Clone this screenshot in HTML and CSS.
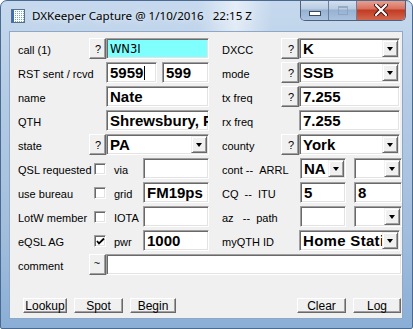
FILE: index.html
```html
<!DOCTYPE html>
<html>
<head>
<meta charset="utf-8">
<link rel="stylesheet" href="styles.css">
</head>
<body>
<div class="window">
  <div class="titlebar">
    <svg class="appicon" width="14" height="14" viewBox="0 0 14 14">
      <defs>
        <pattern id="dots" width="2" height="2" patternUnits="userSpaceOnUse">
          <rect width="2" height="2" fill="#ffffff"/>
          <rect width="1" height="1" fill="#6fa8dc"/>
        </pattern>
      </defs>
      <rect x="0.5" y="0.5" width="13" height="13" fill="url(#dots)" stroke="#5a6e8c"/>
      <rect x="1" y="1" width="2" height="12" fill="#3d6fb0"/>
    </svg>
    <span class="title">DXKeeper Capture @ 1/10/2016&nbsp;&nbsp;&nbsp;22:15 Z</span>
    <div class="caption">
      <div class="cbtn cmin"><span class="minbar"></span></div>
      <div class="cbtn cmax"><span class="maxbox"></span></div>
      <div class="cbtn cclose">
        <svg width="14" height="12" viewBox="0 0 14 12">
          <path d="M2 1 L12 11 M12 1 L2 11" stroke="#3a1010" stroke-width="4" stroke-linecap="round"/>
          <path d="M2 1 L12 11 M12 1 L2 11" stroke="#ffffff" stroke-width="2.2" stroke-linecap="round"/>
        </svg>
      </div>
    </div>
  </div>
  <div class="client">
    <div class="form">
      <!-- row 1 -->
      <div class="lbl">call (1)</div>
      <div class="qbtn">?</div>
      <div class="fld cyan"><span class="thin">WN3I</span></div>
      <div class="gap"></div>
      <div class="lbl">DXCC</div>
      <div class="qbtn">?</div>
      <div class="fld combo"><span class="val">K</span><span class="arrow"></span></div>

      <!-- row 2 -->
      <div class="lbl">RST sent / rcvd</div>
      <div class="empty"></div>
      <div class="split">
        <div class="fld w51"><span class="val">5959</span><span class="caret"></span></div>
        <div class="fld w47"><span class="val">599</span></div>
      </div>
      <div class="gap"></div>
      <div class="lbl">mode</div>
      <div class="qbtn">?</div>
      <div class="fld combo"><span class="val">SSB</span><span class="arrow"></span></div>

      <!-- row 3 -->
      <div class="lbl">name</div>
      <div class="empty"></div>
      <div class="fld"><span class="val">Nate</span></div>
      <div class="gap"></div>
      <div class="lbl">tx freq</div>
      <div class="qbtn">?</div>
      <div class="fld"><span class="val">7.255</span></div>

      <!-- row 4 -->
      <div class="lbl">QTH</div>
      <div class="empty"></div>
      <div class="fld"><span class="val">Shrewsbury, PA</span></div>
      <div class="gap"></div>
      <div class="lbl">rx freq</div>
      <div class="empty"></div>
      <div class="fld"><span class="val">7.255</span></div>

      <!-- row 5 -->
      <div class="lbl">state</div>
      <div class="qbtn">?</div>
      <div class="fld combo"><span class="val">PA</span><span class="arrow"></span></div>
      <div class="gap"></div>
      <div class="lbl">county</div>
      <div class="qbtn">?</div>
      <div class="fld combo"><span class="val">York</span><span class="arrow"></span></div>

      <!-- row 6 -->
      <div class="lbl">QSL requested</div>
      <div class="chkcell"><span class="chk"></span></div>
      <div class="sub"><span class="sublbl">via</span><div class="fld grow"></div></div>
      <div class="gap"></div>
      <div class="lbl">cont -- &nbsp;ARRL</div>
      <div class="empty"></div>
      <div class="split r">
        <div class="fld combo w46"><span class="val">NA</span><span class="arrow"></span></div>
        <div class="fld combo w48"><span class="val"></span><span class="arrow"></span></div>
      </div>

      <!-- row 7 -->
      <div class="lbl">use bureau</div>
      <div class="chkcell"><span class="chk"></span></div>
      <div class="sub"><span class="sublbl">grid</span><div class="fld grow"><span class="val">FM19ps</span></div></div>
      <div class="gap"></div>
      <div class="lbl">CQ &nbsp;-- &nbsp;ITU</div>
      <div class="empty"></div>
      <div class="split r">
        <div class="fld w46"><span class="val">5</span></div>
        <div class="fld w48"><span class="val">8</span></div>
      </div>

      <!-- row 8 -->
      <div class="lbl">LotW member</div>
      <div class="chkcell"><span class="chk"></span></div>
      <div class="sub"><span class="sublbl">IOTA</span><div class="fld grow"></div></div>
      <div class="gap"></div>
      <div class="lbl">az &nbsp;&nbsp;-- &nbsp;path</div>
      <div class="empty"></div>
      <div class="split r">
        <div class="fld w46"></div>
        <div class="fld combo w48"><span class="val"></span><span class="arrow"></span></div>
      </div>

      <!-- row 9 -->
      <div class="lbl">eQSL AG</div>
      <div class="chkcell"><span class="chk on">
        <svg width="9" height="9" viewBox="0 0 9 9"><path d="M1 4 L3 6.5 L8 1.5" fill="none" stroke="#000" stroke-width="1.8"/></svg>
      </span></div>
      <div class="sub"><span class="sublbl">pwr</span><div class="fld grow"><span class="val">1000</span></div></div>
      <div class="gap"></div>
      <div class="lbl">myQTH ID</div>
      <div class="empty"></div>
      <div class="fld combo"><span class="val wide">Home Station</span><span class="arrow"></span></div>

      <!-- row 10 -->
      <div class="lbl">comment</div>
      <div class="qbtn tilde">~</div>
      <div class="fld comment"></div>
    </div>
    <div class="buttons">
      <div class="btn b-lookup">Lookup</div>
      <div class="btn b-spot">Spot</div>
      <div class="btn b-begin">Begin</div>
      <div class="spacer"></div>
      <div class="btn b-clear">Clear</div>
      <div class="btn b-log">Log</div>
    </div>
  </div>
</div>
</body>
</html>
```

FILE: styles.css
```css
* { box-sizing: border-box; }
html, body { margin: 0; padding: 0; background: #ffffff; }

.window {
  width: 413px;
  height: 329px;
  border: 1px solid #4a6a90;
  border-radius: 7px 7px 2px 2px;
  background: linear-gradient(180deg, #c6d9ee 0%, #b4cbe5 30%, #a2bedd 70%, #8aaed6 100%);
  display: flex;
  flex-direction: column;
  overflow: hidden;
  font-family: "Liberation Sans", Arial, sans-serif;
}

.titlebar {
  height: 30px;
  flex: none;
  display: flex;
  align-items: flex-start;
  background: linear-gradient(90deg, rgba(255,255,255,0) 0%, rgba(255,255,255,0) 48%, rgba(255,255,255,0.55) 57%, rgba(255,255,255,0) 66%, rgba(255,255,255,0) 100%);
}
.appicon { margin: 8px 0 0 10px; flex: none; }
.title {
  margin: 7px 0 0 7px;
  font-family: "Noto Sans", "Open Sans", sans-serif;
  font-size: 11.6px;
  line-height: 16px;
  color: #000;
  white-space: nowrap;
  text-shadow: 0 0 6px rgba(255,255,255,0.9);
}
.caption {
  margin-left: auto;
  margin-right: 6px;
  margin-top: -1px;
  display: flex;
  height: 21px;
  border: 1px solid #50607a;
  border-top: none;
  border-radius: 0 0 5px 5px;
  overflow: hidden;
}
.cbtn {
  height: 20px;
  display: flex;
  align-items: center;
  justify-content: center;
}
.cmin, .cmax {
  width: 28px;
  background: linear-gradient(180deg, #d6e2f0 0%, #b8cbe2 45%, #97b1d1 50%, #a9c2df 100%);
  border-right: 1px solid #6a7f9c;
}
.cclose {
  width: 48px;
  background: linear-gradient(180deg, #e8a597 0%, #d7705e 45%, #c23b22 50%, #d2664e 100%);
}
.minbar {
  width: 10px; height: 3px; margin-top: 6px;
  background: #fff; border: 1px solid #3a4a60;
  box-sizing: content-box;
}
.maxbox {
  width: 8px; height: 6px;
  border: 1px solid #8aa0bc; border-top-width: 2px;
  background: transparent;
  box-sizing: content-box;
  opacity: 0.8;
}

.client {
  flex: 1;
  margin: 0 9px 9px 8px;
  background: #f0f0f0;
  border: 1px solid #8fa8c6;
  display: flex;
  flex-direction: column;
  font-size: 11px;
  color: #000;
}

.form {
  display: grid;
  grid-template-columns: 71px 17px 103px 13px 59px 18px 101px;
  grid-auto-rows: 21px;
  row-gap: 3px;
  padding: 6px 0 0 8px;
}
.lbl {
  display: flex;
  align-items: center;
  padding-top: 3px;
  white-space: nowrap;
  font-size: 11px;
}
.qbtn {
  background: #f0f0f0;
  border: 1px solid;
  border-color: #fff #696969 #696969 #fff;
  box-shadow: inset -1px -1px 0 #a0a0a0;
  display: flex;
  align-items: center;
  justify-content: flex-end;
  padding-right: 4px;
  font-size: 11px;
}
.qbtn.tilde { justify-content: center; padding-right: 1px; align-items: flex-start; padding-top: 2px; }

.fld {
  background: #fff;
  border: 1px solid;
  border-color: #a0a0a0 #fff #fff #a0a0a0;
  box-shadow: inset 1px 1px 0 #696969, inset -1px -1px 0 #e3e3e3;
  display: flex;
  align-items: center;
  overflow: hidden;
  position: relative;
  min-width: 0;
}
.fld.cyan { background: #80ffff; }
.thin { padding-left: 3px; font-family: "DejaVu Sans", sans-serif; font-size: 11.5px; }
.val {
  font-weight: bold;
  font-size: 15px;
  padding-left: 3px;
  white-space: nowrap;
  flex: 1;
  min-width: 0;
  overflow: hidden;
  letter-spacing: 0;
}
.val.wide { letter-spacing: 0.3px; }
.caret { position: absolute; left: 37px; top: 3px; width: 1px; height: 14px; background: #000; }

.combo .arrow {
  flex: none;
  width: 16px;
  height: 17px;
  margin-right: 1px;
  background: #f0f0f0;
  border: 1px solid;
  border-color: #f0f0f0 #696969 #696969 #f0f0f0;
  box-shadow: inset 1px 1px 0 #fff, inset -1px -1px 0 #a0a0a0;
  position: relative;
}
.combo .arrow::after {
  content: "";
  position: absolute;
  left: 4px;
  top: 6px;
  border-left: 3.5px solid transparent;
  border-right: 3.5px solid transparent;
  border-top: 4px solid #000;
}

.split {
  display: flex;
  justify-content: space-between;
}
.w51 { width: 51px; }
.w47 { width: 47px; }
.w46 { width: 46px; }
.w48 { width: 48px; }
.split.r { margin-left: 1px; margin-right: -2px; }

.chkcell {
  display: flex;
  align-items: center;
  justify-content: flex-end;
  padding-top: 1px;
}
.chk {
  width: 12px;
  height: 12px;
  background: #fff;
  border: 1px solid;
  border-color: #a0a0a0 #fff #fff #a0a0a0;
  box-shadow: inset 1px 1px 0 #696969, inset -1px -1px 0 #e3e3e3;
  display: flex;
  align-items: center;
  justify-content: center;
}
.sub {
  display: flex;
  align-items: stretch;
}
.sublbl {
  width: 37px;
  padding-left: 8px;
  display: flex;
  align-items: center;
  padding-top: 2px;
  font-size: 11px;
}
.grow { flex: 1; }

.comment { grid-column: 3 / 8; margin-right: -2px; }

.buttons {
  display: flex;
  margin-top: auto;
  margin-bottom: 5px;
  padding: 0 1px 0 13px;
  gap: 7px;
}
.spacer { flex: 1; }
.btn {
  height: 15px;
  background: #f0f0f0;
  border: 1px solid;
  border-color: #fff #696969 #696969 #fff;
  box-shadow: inset -1px -1px 0 #a0a0a0;
  display: flex;
  align-items: center;
  justify-content: center;
  font-size: 12px;
}
.b-lookup { width: 44px; }
.b-spot { width: 49px; }
.b-begin { width: 46px; }
.b-clear { width: 49px; }
.b-log { width: 48px; }
```
